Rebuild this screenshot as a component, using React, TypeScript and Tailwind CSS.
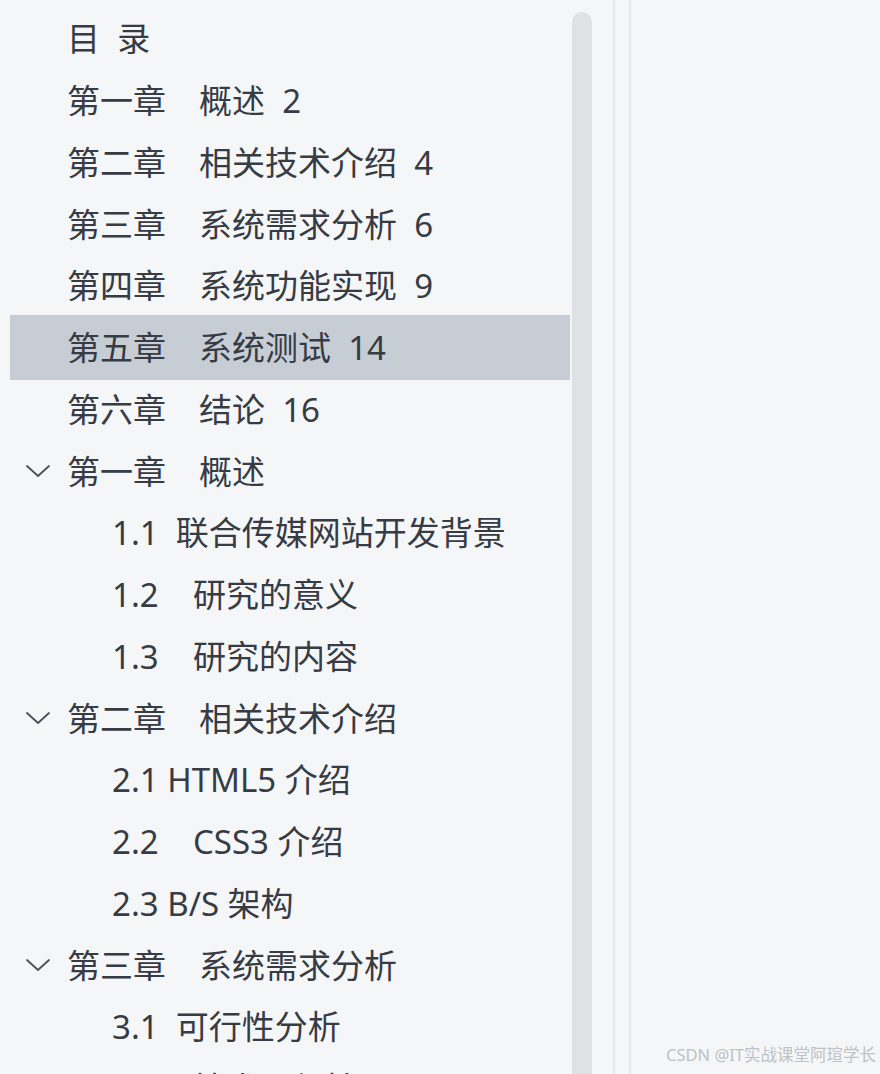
import React from 'react';

type Row = { text: string; level: 0 | 1; chevron?: boolean; active?: boolean };

const rows: Row[] = [
  { text: '目  录', level: 0 },
  { text: '第一章　概述  2', level: 0 },
  { text: '第二章　相关技术介绍  4', level: 0 },
  { text: '第三章　系统需求分析  6', level: 0 },
  { text: '第四章　系统功能实现  9', level: 0 },
  { text: '第五章　系统测试  14', level: 0, active: true },
  { text: '第六章　结论  16', level: 0 },
  { text: '第一章　概述', level: 0, chevron: true },
  { text: '1.1  联合传媒网站开发背景', level: 1 },
  { text: '1.2    研究的意义', level: 1 },
  { text: '1.3    研究的内容', level: 1 },
  { text: '第二章　相关技术介绍', level: 0, chevron: true },
  { text: '2.1 HTML5 介绍', level: 1 },
  { text: '2.2    CSS3 介绍', level: 1 },
  { text: '2.3 B/S 架构', level: 1 },
  { text: '第三章　系统需求分析', level: 0, chevron: true },
  { text: '3.1  可行性分析', level: 1 },
  { text: '3.2    技术可行性', level: 1 },
];

function Chevron() {
  return (
    <svg width="26" height="16" viewBox="0 0 26 16" fill="none" stroke="#4a4f57" strokeWidth={1.8}>
      <polyline points="2,3 13,13 24,3" strokeLinecap="round" strokeLinejoin="round" />
    </svg>
  );
}

export default function App() {
  return (
    <div
      className="relative flex h-[1074px] w-[880px] overflow-hidden bg-[#f5f6f8] text-[#363b44]"
      style={{ fontFamily: '"Noto Sans", "Noto Sans CJK SC", sans-serif' }}
    >
      <div className="ml-[10px] w-[560px] shrink-0 pt-[8px]">
        {rows.map((r, i) => (
          <div
            key={i}
            className={`flex items-center whitespace-pre text-[33px] leading-none ${
              r.active ? '-my-[1.5px] h-[64.75px] bg-[#c6cdd5]' : 'h-[61.75px]'
            } ${r.level === 1 ? 'pl-[102px]' : 'pl-[15px]'}`}
          >
            {r.level === 0 && (
              <span className="flex w-[42px] shrink-0 items-center">{r.chevron && <Chevron />}</span>
            )}
            <span>{r.text}</span>
          </div>
        ))}
      </div>

      <div className="ml-[2px] w-[20px] shrink-0 pt-[12px]">
        <div className="h-full rounded-t-[10px] bg-[#dee2e5]" />
      </div>
      <div className="ml-[21px] w-[2px] shrink-0 bg-[#e6e8ec]" />
      <div className="ml-[14px] w-[2px] shrink-0 bg-[#e6e8ec]" />
      <div className="flex-1" />

      <div className="absolute bottom-[6px] right-[4px] text-[16.5px] text-[#bfc1c4]">CSDN @IT实战课堂阿瑄学长</div>
    </div>
  );
}
